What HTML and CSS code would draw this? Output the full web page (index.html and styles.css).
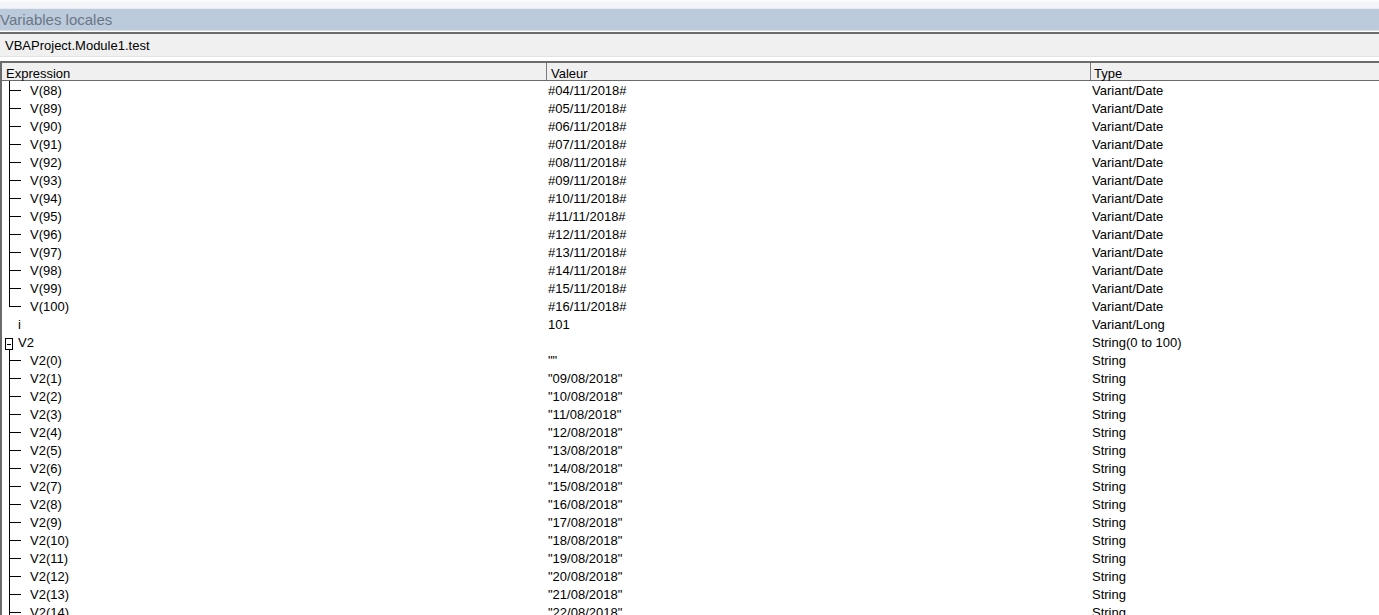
FILE: index.html
```html
<!DOCTYPE html>
<html>
<head>
<meta charset="utf-8">
<link rel="stylesheet" href="styles.css">
</head>
<body>
<div class="window">
  <div class="topstrip"></div>
  <div class="titlebar">Variables locales</div>
  <div class="context">VBAProject.Module1.test</div>
  <div class="grid">
    <div class="head">
      <div class="hc c1">Expression</div>
      <div class="hc c2">Valeur</div>
      <div class="hc c3">Type</div>
    </div>
    <div class="body" id="body"></div>
  </div>
</div>
<script src="app.js"></script>
</body>
</html>
```
FILE: styles.css
```css
* { box-sizing: border-box; }
html, body { margin: 0; padding: 0; background: #ffffff; }
body { font-family: "Liberation Sans", Arial, sans-serif; font-size: 13px; color: #000; overflow: hidden; }
.window { width: 1379px; height: 615px; overflow: hidden; }
.topstrip { height: 9px; background: #f3f4f8; border-top: 2px solid #fbfbfb; border-bottom: 1px solid #e8ebf0; }
.titlebar { height: 22px; background: #bccbdb; color: #6a7686; font-size: 15px; line-height: 22px; padding-left: 0; border-bottom: 1px solid #d6dee8; white-space: nowrap; }
.context { height: 25px; margin-top: 1px; background: #f0f0f0; border-top: 2px solid #6b6b6b; border-bottom: 1px solid #e3e3e3; padding-left: 5px; line-height: 24px; font-size: 13px; }
.grid { margin-top: 4px; border-top: 2px solid #6b6b6b; border-left: 2px solid #6b6b6b; }
.head { display: flex; height: 18px; background: #f0f0f0; border-bottom: 1px solid #6b6b6b; }
.hc { line-height: 21px; height: 17px; padding-left: 4px; font-size: 13px; }
.c1 { width: 544px; }
.c2 { width: 544px; border-left: 1px solid #7b7b7b; padding-left: 4px; }
.c3 { flex: 1; border-left: 1px solid #7b7b7b; padding-left: 3px; }
.row { display: flex; height: 18px; line-height: 20px; }
.rc1 { width: 544px; position: relative; }
.rc2 { width: 544px; padding-left: 2px; }
.rc3 { flex: 1; padding-left: 2px; }
.vline { position: absolute; left: 7px; top: 0; bottom: 0; width: 1px; background: #000; }
.vline.half { bottom: 9px; }
.hline { position: absolute; left: 7px; top: 9px; width: 12px; height: 1px; background: #000; }
.label { position: absolute; left: 28px; top: 0; }
.label.lvl0 { left: 16px; }
.box { position: absolute; left: 3px; top: 5px; width: 8px; height: 12px; border: 1px solid #000; background: #fff; }
.box::after { content: ""; position: absolute; left: 1px; right: 1px; top: 5px; height: 1px; background: #000; }
.boxstem { position: absolute; left: 7px; top: 16px; bottom: 0; width: 1px; background: #000; }
```
FILE: app.js
```js
const body = document.getElementById('body');
const rows = [];
for (let i = 88; i <= 100; i++) {
  const d = String(i - 84).padStart(2, '0');
  rows.push({ kind: i === 100 ? 'last' : 'child', name: 'V(' + i + ')', val: '#' + d + '/11/2018#', type: 'Variant/Date' });
}
rows.push({ kind: 'root', name: 'i', val: '101', type: 'Variant/Long' });
rows.push({ kind: 'parent', name: 'V2', val: '', type: 'String(0 to 100)' });
rows.push({ kind: 'child', name: 'V2(0)', val: '""', type: 'String' });
for (let i = 1; i <= 14; i++) {
  const d = String(i + 8).padStart(2, '0');
  rows.push({ kind: 'child', name: 'V2(' + i + ')', val: '"' + d + '/08/2018"', type: 'String' });
}
for (const r of rows) {
  const row = document.createElement('div');
  row.className = 'row';
  const c1 = document.createElement('div');
  c1.className = 'rc1';
  let html = '';
  if (r.kind === 'child') html = '<span class="vline"></span><span class="hline"></span><span class="label">' + r.name + '</span>';
  else if (r.kind === 'last') html = '<span class="vline half"></span><span class="hline"></span><span class="label">' + r.name + '</span>';
  else if (r.kind === 'root') html = '<span class="label lvl0">' + r.name + '</span>';
  else if (r.kind === 'parent') html = '<span class="boxstem"></span><span class="box"></span><span class="label lvl0">' + r.name + '</span>';
  c1.innerHTML = html;
  const c2 = document.createElement('div'); c2.className = 'rc2'; c2.textContent = r.val;
  const c3 = document.createElement('div'); c3.className = 'rc3'; c3.textContent = r.type;
  row.append(c1, c2, c3);
  body.appendChild(row);
}
```
